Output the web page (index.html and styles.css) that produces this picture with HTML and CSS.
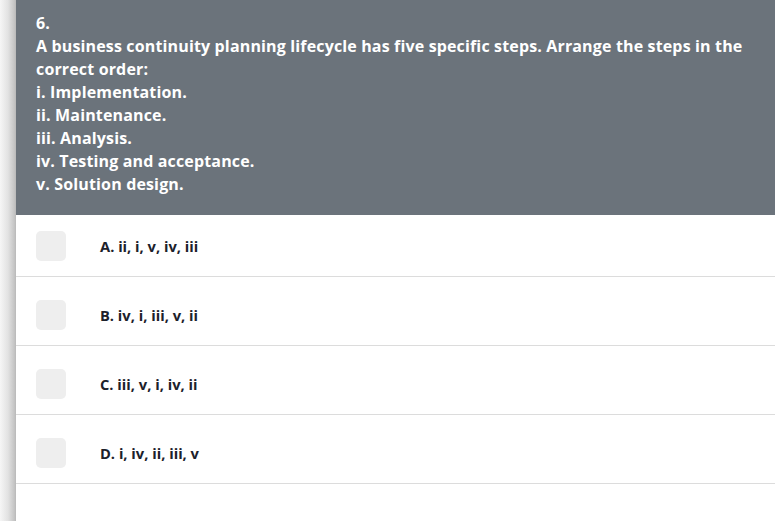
FILE: index.html
```html
<!DOCTYPE html>
<html>
<head>
<meta charset="utf-8">
<link rel="stylesheet" href="styles.css">
</head>
<body>
<div class="page">
  <div class="edge"></div>
  <div class="panel">
    <div class="question">
      <div>6.</div>
      <div>A business continuity planning lifecycle has five specific steps. Arrange the steps in the correct order:</div>
      <div>i. Implementation.</div>
      <div>ii. Maintenance.</div>
      <div>iii. Analysis.</div>
      <div>iv. Testing and acceptance.</div>
      <div>v. Solution design.</div>
    </div>
    <div class="option first"><span class="box"></span><span class="label">A. ii, i, v, iv, iii</span></div>
    <div class="option"><span class="box"></span><span class="label">B. iv, i, iii, v, ii</span></div>
    <div class="option"><span class="box"></span><span class="label">C. iii, v, i, iv, ii</span></div>
    <div class="option"><span class="box"></span><span class="label">D. i, iv, ii, iii, v</span></div>
  </div>
</div>
</body>
</html>
```
FILE: styles.css
```css
html, body { margin: 0; padding: 0; background: #fff; }
body { font-family: "Open Sans", "Liberation Sans", sans-serif; }
.page { display: flex; width: 775px; height: 521px; overflow: hidden; }
.edge { width: 16px; flex: none; background: linear-gradient(to right, #f6f6f6 0%, #e2e2e2 50%, #c4c4c4 90%, #b8b8b8 100%); }
.panel { flex: 1; display: flex; flex-direction: column; }
.question {
  background: #6b737b;
  color: #fff;
  font-weight: 700;
  font-size: 16px;
  letter-spacing: 0.15px;
  line-height: 23px;
  padding: 12px 20px 0 20px;
  height: 215px;
  box-sizing: border-box;
}
.option {
  display: flex;
  align-items: center;
  padding: 23px 0 15px 0;
  border-bottom: 1px solid #dcdcdc;
}
.option.first { padding-top: 16px; }
.box {
  width: 30px; height: 30px;
  background: #eeeeee;
  border-radius: 5px;
  margin-left: 20px;
  flex: none;
}
.label {
  margin-left: 34px;
  font-weight: 700;
  font-size: 14.7px;
  color: #1c212b;
}
```
